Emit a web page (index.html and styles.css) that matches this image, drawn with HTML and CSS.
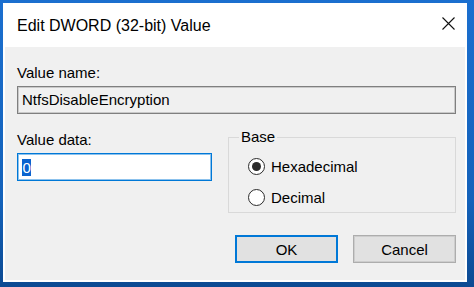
FILE: index.html
```html
<!DOCTYPE html>
<html>
<head>
<meta charset="utf-8">
<title>Edit DWORD (32-bit) Value</title>
<link rel="stylesheet" href="styles.css">
</head>
<body>
<div class="window">
  <div class="titlebar">
    <span class="title">Edit DWORD (32-bit) Value</span>
    <svg class="close" width="13" height="13" viewBox="0 0 13 13"><path d="M0.5 0.5 L12.5 12.5 M12.5 0.5 L0.5 12.5" stroke="#111" stroke-width="1.1" fill="none"/></svg>
  </div>
  <div class="panel">
    <div class="label">Value name:</div>
    <div class="field readonly">NtfsDisableEncryption</div>
    <div class="row">
      <div class="col-left">
        <div class="label">Value data:</div>
        <div class="field active"><span class="sel">0</span></div>
      </div>
      <fieldset class="group">
        <legend>Base</legend>
        <div class="radio"><span class="circle checked"></span>Hexadecimal</div>
        <div class="radio second"><span class="circle"></span>Decimal</div>
      </fieldset>
    </div>
    <div class="buttons">
      <div class="btn default">OK</div>
      <div class="btn">Cancel</div>
    </div>
  </div>
</div>
</body>
</html>
```
FILE: styles.css
```css
html, body {
  margin: 0;
  padding: 0;
}
body {
  width: 474px;
  height: 287px;
  overflow: hidden;
  background: linear-gradient(180deg, #1b6fcf 0%, #1462ba 70%, #0c4a92 100%);
  font-family: "Liberation Sans", Arial, sans-serif;
  color: #000;
}
.window {
  margin: 3px 0 0 3px;
  width: 464px;
  height: 279px;
  box-sizing: border-box;
  border: 2px solid #fff;
  border-top: 0;
  background: #fff;
  display: flex;
  flex-direction: column;
}
.titlebar {
  height: 44px;
  flex: none;
  display: flex;
  justify-content: space-between;
  align-items: flex-start;
  padding: 0 10px 0 12px;
  background: #fff;
}
.title {
  font-size: 16px;
  line-height: 44px;
  padding-top: 1px;
}
.close {
  margin-top: 14px;
}
.panel {
  flex: 1;
  background: #f0f0f0;
  padding: 17px 9px 0 12px;
  font-size: 15px;
}
.label {
  line-height: 18px;
  height: 18px;
}
.field {
  margin-top: 4px;
  height: 28px;
  box-sizing: border-box;
  display: flex;
  align-items: center;
  padding-left: 4px;
  line-height: 18px;
}
.readonly {
  border: 1px solid #7f7f7f;
  box-shadow: inset 0 0 0 1px #c9c9c9;
  background: #f0f0f0;
}
.active {
  border: 1px solid #0078d7;
  box-shadow: inset 0 0 0 1px rgba(0, 120, 215, 0.45);
  background: #fff;
}
.sel {
  display: inline-block;
  background: #0a64cf;
  color: #fff;
  line-height: 17px;
  height: 17px;
  padding: 0 0.5px;
}
.row {
  margin-top: 14px;
  display: grid;
  grid-template-columns: 195px 1fr;
  column-gap: 16px;
  align-items: start;
}
.col-left {
  padding-top: 3px;
}
.group {
  margin: 0;
  min-width: 0;
  border: 1px solid #d9d9d9;
  padding: 8px 0 3px 10px;
}
.group legend {
  padding: 0 2px;
  line-height: 18px;
  font-size: 15px;
}
.radio {
  margin-left: 9px;
  height: 24px;
  display: flex;
  align-items: center;
  gap: 6px;
}
.radio.second {
  margin-top: 7px;
}
.circle {
  width: 17px;
  height: 17px;
  box-sizing: border-box;
  border: 1px solid #2b2b2b;
  border-radius: 50%;
  background: #fff;
  display: flex;
  align-items: center;
  justify-content: center;
}
.circle.checked::after {
  content: "";
  width: 9px;
  height: 9px;
  border-radius: 50%;
  background: #2b2b2b;
}
.buttons {
  margin-top: 22px;
  display: flex;
  justify-content: flex-end;
  gap: 15px;
}
.btn {
  width: 103px;
  height: 28px;
  box-sizing: border-box;
  background: #e1e1e1;
  border: 1px solid #adadad;
  box-shadow: inset 0 0 0 1px #cdcdcd;
  display: flex;
  align-items: center;
  justify-content: center;
  font-size: 15px;
}
.btn.default {
  border: 2px solid #0078d7;
  box-shadow: none;
}
```
